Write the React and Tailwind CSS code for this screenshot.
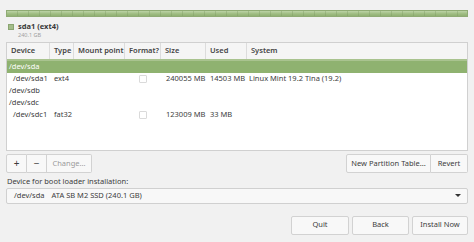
const COLS = 'grid grid-cols-[43px_24px_51px_36px_45px_41px_1fr]'

const HEADERS = ['Device', 'Type', 'Mount point', 'Format?', 'Size', 'Used', 'System']

const ROWS = [
  { device: '/dev/sda', selected: true },
  { device: '/dev/sda1', sub: true, type: 'ext4', format: true, size: '240055 MB', used: '14503 MB', system: 'Linux Mint 19.2 Tina (19.2)' },
  { device: '/dev/sdb' },
  { device: '/dev/sdc' },
  { device: '/dev/sdc1', sub: true, type: 'fat32', format: true, size: '123009 MB', used: '33 MB', system: '' },
]

function Button({ children, className = '', disabled }) {
  return (
    <div
      className={`h-[19px] flex items-center justify-center whitespace-nowrap border border-[#d2d2d2] bg-[#f8f8f8] rounded-[2px] text-[7.5px] ${disabled ? 'text-[#9a9a9a]' : 'text-[#3c3c3c]'} ${className}`}
    >
      {children}
    </div>
  )
}

export default function App() {
  return (
    <div
      className="w-[474px] h-[242px] bg-[#f1f1f1] px-[6px] pt-[10px] flex flex-col overflow-hidden text-[#3c3c3c] whitespace-nowrap"
      style={{ fontFamily: '"Noto Sans", "Open Sans", sans-serif' }}
    >
      {/* partition bar */}
      <div className="h-[7px] w-full border border-[#8fab74] bg-[linear-gradient(#bcd3a6,#9dbb80_60%,#91b074)] relative">
        <div className="absolute inset-0 bg-[repeating-linear-gradient(90deg,transparent_0px,transparent_10px,rgba(120,150,95,0.35)_10px,rgba(120,150,95,0.35)_11px)]" />
      </div>

      <div className="flex items-start gap-[4px] mt-[6px] pl-[2px]">
        <div className="w-[6px] h-[6px] mt-[1px] bg-[#a3bd8a] border border-[#8aa571]" />
        <div className="flex flex-col leading-none">
          <span className="text-[7.5px] font-bold text-[#3a3a3a]">sda1 (ext4)</span>
          <span className="text-[5.5px] text-[#a0a0a0] mt-[2px]">240.1 GB</span>
        </div>
      </div>

      {/* partition table */}
      <div className="mt-[4px] h-[109px] border border-[#d0d0d0] bg-white flex flex-col">
        <div className={`${COLS} h-[18px] shrink-0 bg-[#f5f5f5] border-b-2 border-[#a9c38f]`}>
          {HEADERS.map((h, i) => (
            <div
              key={h}
              className={`flex items-center pl-[4px] text-[7.5px] font-semibold text-[#444] ${i < HEADERS.length - 1 ? 'border-r border-[#dcdcdc]' : ''}`}
            >
              {h}
            </div>
          ))}
        </div>
        {ROWS.map((r) => (
          <div
            key={r.device}
            className={`${COLS} h-[12px] shrink-0 items-center text-[7.5px] leading-none ${r.selected ? 'bg-[#8fb270] text-white' : 'text-[#3c3c3c]'}`}
          >
            <div className={r.sub ? 'pl-[6px]' : 'pl-[2px]'}>{r.device}</div>
            <div className="pl-[4px]">{r.type}</div>
            <div />
            <div className="flex justify-center">
              {r.format && <div className="w-[8px] h-[8px] border border-[#dadada] bg-white rounded-[1px]" />}
            </div>
            <div className="pl-[5px]">{r.size}</div>
            <div className="pl-[4px]">{r.used}</div>
            <div className="pl-[2px]">{r.system}</div>
          </div>
        ))}
      </div>

      {/* table actions */}
      <div className="flex mt-[3px]">
        <div className="flex">
          <Button className="w-[21px] rounded-r-none text-[10px]">+</Button>
          <Button className="w-[20px] rounded-none border-l-0 text-[10px]">−</Button>
          <Button className="w-[45px] rounded-l-none border-l-0" disabled>Change...</Button>
        </div>
        <div className="flex-1" />
        <Button className="w-[85px] rounded-r-none">New Partition Table...</Button>
        <Button className="w-[37px] rounded-l-none border-l-0">Revert</Button>
      </div>

      <div className="mt-[5px] text-[7.5px] leading-none pl-[1px] text-[#3c3c3c]">Device for boot loader installation:</div>

      <div className="mt-[2px] h-[16px] border border-[#d0d0d0] bg-[#f8f8f8] rounded-[2px] flex items-center pl-[7px] pr-[6px] text-[7.5px]">
        <span>/dev/sda</span>
        <span className="ml-[7px]">ATA SB M2 SSD (240.1 GB)</span>
        <div className="flex-1" />
        <div className="w-0 h-0 border-l-[3px] border-r-[3px] border-t-[3px] border-l-transparent border-r-transparent border-t-[#333]" />
      </div>

      <div className="flex justify-end gap-[3px] mt-[12px]">
        <Button className="w-[58px]">Quit</Button>
        <Button className="w-[57px]">Back</Button>
        <Button className="w-[56px]">Install Now</Button>
      </div>
    </div>
  )
}
